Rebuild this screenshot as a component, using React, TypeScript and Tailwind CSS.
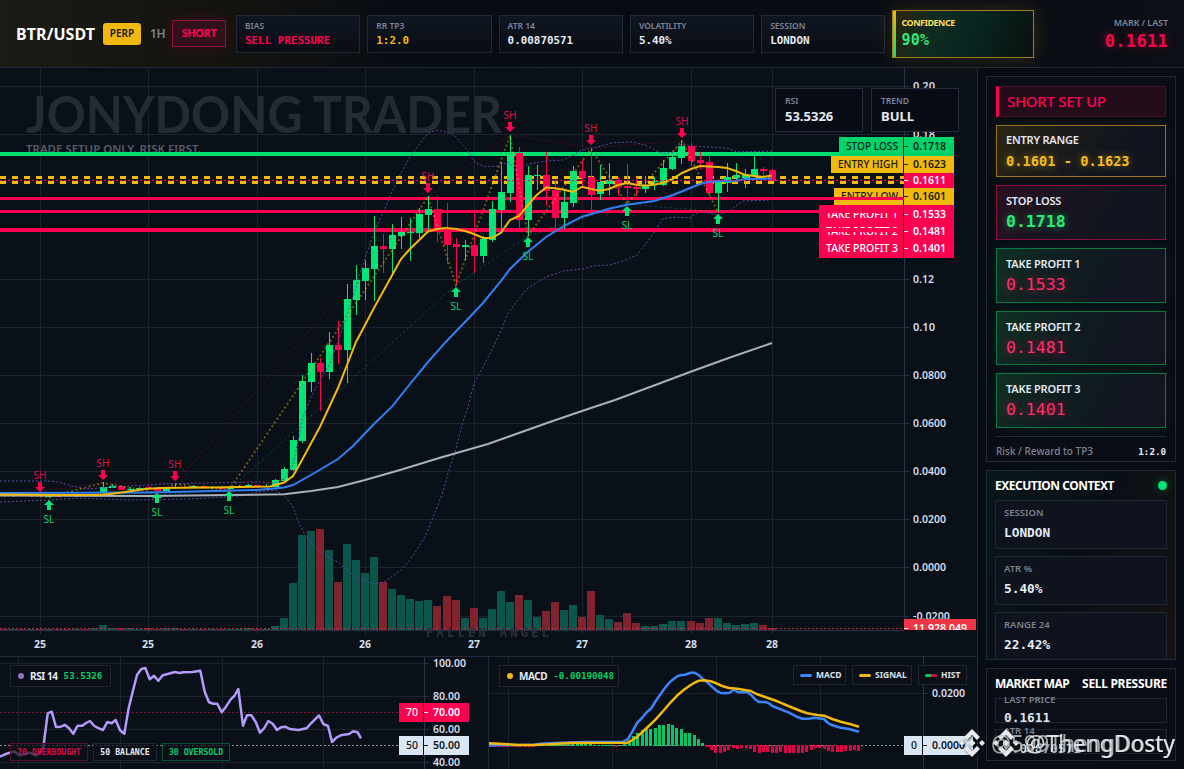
import type { ReactNode } from 'react';

type Candle = readonly [open: number, close: number, high: number, low: number, up: number, volTop: number];

// top, bottom, high, low, direction, volume top; one entry per hourly bar
const CANDLES: readonly Candle[] = [
  [495, 496, 494, 497, 0, 629], [495, 496, 494, 497, 1, 629], [494, 495, 493, 497, 0, 629], [494, 496, 493, 497, 1, 629],
  [494, 496, 491, 497, 0, 629], [496, 497, 495, 498, 1, 629], [496, 497, 495, 497, 0, 629], [495, 496, 494, 497, 0, 629],
  [495, 496, 494, 497, 1, 629], [495, 496, 494, 497, 0, 629], [494, 496, 493, 497, 1, 628], [487, 492, 482, 492, 1, 625],
  [486, 488, 484, 488, 1, 628], [486, 490, 485, 490, 0, 628], [489, 490, 487, 491, 1, 628], [488, 489, 487, 490, 1, 629],
  [487, 489, 486, 489, 0, 628], [489, 491, 488, 491, 0, 629], [489, 491, 488, 491, 1, 628], [487, 488, 484, 489, 1, 628],
  [487, 488, 486, 489, 0, 629], [486, 487, 485, 488, 1, 629], [486, 487, 485, 489, 0, 629], [487, 488, 486, 489, 1, 629],
  [487, 489, 486, 489, 0, 629], [487, 489, 486, 489, 1, 629], [486, 487, 485, 488, 1, 629], [485, 486, 484, 487, 1, 628],
  [485, 486, 485, 488, 0, 629], [486, 487, 484, 487, 1, 629], [480, 487, 479, 487, 1, 626], [469, 481, 467, 481, 1, 618],
  [440, 470, 436, 471, 1, 583], [381, 441, 375, 443, 1, 535], [363, 382, 353, 392, 1, 531], [363, 372, 358, 411, 0, 529],
  [345, 372, 332, 379, 1, 550], [345, 350, 321, 364, 0, 582], [299, 350, 284, 383, 1, 544], [280, 300, 265, 315, 1, 560],
  [268, 281, 260, 300, 1, 573], [246, 269, 216, 301, 1, 557], [246, 249, 234, 273, 0, 582], [235, 249, 224, 273, 1, 589],
  [232, 236, 217, 249, 1, 595], [232, 233, 218, 261, 1, 599], [214, 233, 208, 238, 1, 601], [209, 215, 196, 230, 1, 600],
  [209, 230, 196, 242, 0, 606], [230, 245, 203, 264, 0, 596], [244, 247, 238, 285, 0, 600], [245, 247, 240, 260, 1, 618],
  [245, 256, 213, 273, 0, 608], [239, 256, 236, 263, 1, 618], [209, 240, 201, 242, 1, 609], [192, 210, 162, 232, 1, 591],
  [154, 193, 135, 202, 1, 602], [153, 220, 147, 228, 0, 595], [175, 220, 166, 236, 1, 600], [175, 176, 165, 190, 1, 617],
  [175, 191, 152, 206, 0, 611], [190, 218, 179, 228, 0, 602], [202, 218, 191, 229, 1, 610], [171, 203, 166, 207, 1, 605],
  [171, 178, 160, 187, 0, 617], [177, 195, 148, 210, 0, 591], [182, 194, 165, 200, 1, 615], [180, 184, 163, 195, 1, 619],
  [180, 187, 177, 196, 0, 622], [186, 188, 164, 204, 0, 613], [187, 189, 178, 196, 0, 623], [185, 189, 176, 193, 1, 626],
  [181, 182, 177, 190, 1, 626], [168, 185, 160, 186, 1, 624], [157, 169, 156, 170, 1, 621], [146, 158, 141, 164, 1, 621],
  [146, 161, 143, 166, 0, 621], [160, 163, 152, 170, 0, 623], [162, 193, 155, 196, 0, 618], [182, 193, 180, 212, 1, 618],
  [177, 183, 163, 192, 1, 623], [175, 178, 163, 181, 1, 625], [174, 178, 169, 188, 1, 624], [169, 176, 156, 177, 1, 623],
  [169, 171, 167, 177, 0, 625], [170, 181, 169, 181, 0, 628],
];

const MA_FAST =
  '0,494.5 60,495 98,495 110,494 125,492 145,489 160,488 210,487.5 270,486.5 284,482.5 293,476 302,460 320,426.7 338,388 356,342 374,308 401,259 410,249 428,231.5 437,229 446,228 456,229 465,231 474,234 483,238 492,238 501,232.7 510,220 519,216 528,205 537,194.7 546,187.5 555,188.3 564,189.7 573,192 582,186.7 591,189 600,190.7 609,189 618,185 627,183 636,184.7 645,185.7 654,184.7 663,182.7 672,179.3 682,173 691,169 700,166 718,167 727,168 736,171 745,175 754,176 763,177 772,175.5';
const MA_MID =
  '0,493 150,492.5 257,490 284,487.5 293,485 311,475 338,459 353,446 374,424 392,406.7 410,384 428,362 446,341.7 465,322 483,303 501,281 510,269 528,251.7 546,237 564,226 582,216.7 609,208.7 627,204.7 654,201 673,195 700,184 709,181.7 718,180.7 736,181 745,179 772,178.7';
const MA_SLOW =
  '0,495.5 150,496 230,495 284,494.3 311,491 338,487 365,480 400,470 440,457.7 474,448 488,444 547,423 582,411 615,400 650,387 690,372 730,357.5 772,343';
const BAND_TOP =
  '0,481 50,481 60,482.5 72,486 85,489 100,488 130,486 165,484 200,483 257,482 275,483 284,479 293,465 299,436 302,420 311,397 320,380 329,365 338,342 347,315 356,287 365,258 374,233 383,213 395,185 400,175 410,157 428,133 438,130 453,134 467,150 475,163 485,166.5 500,166 508,162 517,171 528,164 547,161 563,160 573,155 582,150 597,147 613,142.7 633,142 645,145 663,154 673,152 682,143 690,146 727,148 737,152 772,151';
const BAND_BOTTOM =
  '0,502 50,500 80,498 100,499 130,500 190,499 240,496 257,492 275,490 284,495 293,507 299,523 305,535 311,543 320,551 329,558 338,562 350,573 362,580 374,584 384,582 400,571 410,560 425,537 433,517 442,495 448,473 455,452 463,422 467,410 474,383 483,367 492,350 500,333 508,313 518,300 528,288 546,277 563,271 583,269 593,266 610,265 623,261 637,255 650,238 663,219 673,217 690,218 700,211 717,215 728,212 743,201 770,200';

const SWING = '0,493 49,497 103,483 157,493 175,484 229,490 428,197 456,285 510,136 528,236 591,149 627,204 682,141 718,212';
const SWING_HIGHS = '40,491 103,483 175,483 428,197 510,135 591,148 682,141';
const SWING_LOWS = '49,497 157,495 229,490 456,285 528,236 627,204 718,212';

const HIGHS = [[40, 482], [103, 470], [175, 471], [428, 183], [510, 122], [591, 135], [682, 128]] as const;
const LOWS = [[49, 500], [157, 493], [229, 491], [456, 287], [528, 237], [627, 206], [718, 214]] as const;

const TIME_TICKS = [[40, '25'], [148, '25'], [257, '26'], [365, '26'], [474, '27'], [582, '27'], [691, '28'], [772, '28']] as const;
const PRICE_TICKS = [
  [86, '0.20', 22], [134, '0.18', 22], [182, '', 0], [231, '', 0], [279, '0.12', 21], [327, '0.10', 22],
  [375, '0.0800', 33], [423, '0.0600', 33], [471, '0.0400', 33], [519, '0.0200', 33], [567, '0.0000', 33], [616, '-0.0200', 37],
] as const;

const RSI_LINE =
  '0,756.5 5,754.3 10,752.6 15,751.6 19,755.3 25,754 30,752.6 36,755.3 40,752.6 43.3,747.3 47.7,713.3 51.7,711.7 56,727 60.7,726.7 65,725 69,728.3 73.3,733.7 77.7,725.7 82.3,725.7 86,723 90,721 94.3,726 99,728.3 103,730 107.3,722 111.7,723.3 115.7,720 120,730.3 124.3,733.7 128.7,708 132.7,691.7 137,675 141.3,669 145.3,668 149.7,679.3 154,675.7 158.3,680.7 162.7,675.3 166.7,674.3 175,672 179.3,673 183.3,672.3 192.7,672 200.3,670.7 204.7,691.7 209,702.3 213.3,703.7 217.3,703.7 221.7,712.3 226,706.7 230.7,699.3 234.3,696 238.3,689 243,725.7 247,715.3 251.3,715.3 255.7,722 260,732.7 264.3,728 268.3,721 272.7,723.7 277,730 281,727.3 285.3,726.7 289.7,729 298.3,730 306.7,728.3 311,723.3 319,715.3 323.3,724 328,726 332,742 336.7,737.3 340.7,735.3 349,734 353.3,731.3 357.7,732.3 361,738.3';

const MACD_LINE =
  '489,745.3 534,744.7 540.7,743.7 560.7,742.7 584,742 622.3,742 628,739 632.3,731.7 637.3,722.7 642,718 646.7,712.3 651.3,708.3 655.7,701 664,689.3 668.3,683.7 672.7,679.7 677.3,676.3 681.3,675 685,674.7 690.7,672.7 694.7,672.7 699,675.3 703.3,679.3 707.3,682.3 716.3,690.7 720.7,693 725.7,693.3 729.7,692.7 734,689.7 738,692.3 747.3,692.3 751.3,695 755,699.3 759,702 765.7,702 769,703.3 772.3,706 780.7,709.3 789,712.7 797.3,717 802.3,718.7 809,718.7 814,717.7 824,719 828,723 832.3,725.3 840.7,727.7 849,729 859,731.7';
const SIGNAL_LINE =
  '489,743.3 504,744 517.3,745 534,745 550.7,744.3 570.7,743 627.3,742.7 632.3,740 637.3,736.7 642,732.3 646.7,728 651.3,723.7 655.7,719.3 664,710 670.7,702.3 677.3,695.3 684,689.7 690.7,685 694.7,682.7 699,680.7 704,680.3 710.7,681.3 716.3,683.3 722.3,686 729,688 737.3,688.7 750.7,691 757.3,694.3 767.3,697.7 777.3,701.3 790.7,707 800.7,711 807.3,713.3 817.3,715 824,715.7 832.3,719 840.7,721.7 850.7,724.3 859,726.7';

const HIST = [
  -1, -1, -1, -1, -1, -1, -1, -1, -1, -1, -1, 2, 2, 2, 2, 1, 2, 2, 2, 2, 2, 2, 2, 2, 1, 1, 1, 1, 1, -1, 1, 2, 4,
  10, 13, 16, 17, 17, 18, 21, 21, 22, 21, 18, 17, 13, 13, 11, 7, 3,
  -1, -4, -7, -7, -6, -4, -2, -3, -2, -2, -3, -6, -7, -6, -6, -7, -7, -6, -7, -7, -7, -7, -7, -6, -4, -2, -2, -3, -5, -6, -6, -6, -5, -5, -4, -5,
];

const UP = '#00e676';
const DOWN = '#ff0051';
const GOLD = '#f0b90b';

const barCenter = (i: number) => Math.round(39.85 + (i - 4) * 9.037);

function Label({
  x,
  y,
  w,
  children,
  fill = '#d5dcea',
  size = 11,
  weight = 600,
  anchor = 'start',
}: {
  x: number;
  y: number;
  w?: number;
  children: ReactNode;
  fill?: string;
  size?: number;
  weight?: number;
  anchor?: 'start' | 'middle' | 'end';
}) {
  return (
    <text
      x={x}
      y={y}
      fill={fill}
      fontSize={size}
      fontWeight={weight}
      textAnchor={anchor}
      textLength={w}
      lengthAdjust={w ? 'spacingAndGlyphs' : undefined}
    >
      {children}
    </text>
  );
}

function Tag({ x, y, h, name, w, price, bg, fill }: { x: number; y: number; h: number; name: string; w: number; price: string; bg: string; fill: string }) {
  const mid = Math.floor(y + h / 2);
  return (
    <g>
      {name ? <rect x={x} y={y} width={903 - x} height={h} fill={bg} /> : null}
      <rect x={904} y={y} width={50} height={h} fill={bg} />
      <rect x={904} y={mid} width={4} height={1} fill={fill} />
      {name ? <Label x={898} y={mid + 4} w={w} fill={fill} weight={500} anchor="end">{name}</Label> : null}
      <Label x={913} y={mid + 4} w={33} fill={fill}>{price}</Label>
    </g>
  );
}

function LevelLines({ from }: { from: number }) {
  return (
    <g>
      <rect x={from} y={197} width={904 - from} height={3} fill={DOWN} />
      <rect x={from} y={210} width={903 - from} height={3} fill={DOWN} />
      <rect x={from} y={228} width={903 - from} height={4} fill={DOWN} />
    </g>
  );
}

function PriceChart() {
  return (
    <svg className="block h-[588px] w-[977px]" viewBox="0 68 977 588">
      <g fill="#1c232d">
        {TIME_TICKS.map(([x]) => <rect key={x} x={x} y={68} width={1} height={562} />)}
        {PRICE_TICKS.map(([y]) => <rect key={y} x={0} y={y} width={904} height={1} />)}
      </g>

      <text
        x={26}
        y={133}
        fontSize={52}
        fontWeight={700}
        fill="#252b35"
        textLength={476}
        lengthAdjust="spacingAndGlyphs"
        className="font-['Lato','Noto_Sans',sans-serif]"
      >
        JONYDONG TRADER
      </text>
      <Label x={26} y={153} w={175} size={11.5} weight={600} fill="#565c65">TRADE SETUP ONLY. RISK FIRST.</Label>

      {CANDLES.map(([, , , , up, top], i) => (
        <rect key={i} x={barCenter(i) - 4} y={top} width={8} height={630 - top} fill={up ? '#0a564c' : '#82222f'} />
      ))}
      <path d="M0 628.5H904" stroke="#c22a45" strokeDasharray="2 2" />
      <text x={426} y={637} fontSize={12} fontWeight={700} fill="#2b303a" textLength={123} className="font-['DejaVu_Sans_Mono',monospace]">
        FALLEN ANGEL
      </text>

      <rect x={0} y={152} width={903} height={4} fill="#00e070" />
      <g fill={GOLD}>
        {Array.from({ length: 76 }, (_, i) => (
          <path key={i} d={`M${i * 12} 176h6v3h-6zM${i * 12} 181h6v3h-6z`} />
        ))}
      </g>
      <LevelLines from={0} />

      {CANDLES.map(([top, bottom, high, low, up], i) => {
        const x = barCenter(i);
        return (
          <g key={i} fill={up ? UP : DOWN}>
            <rect x={x} y={high} width={1} height={low - high} />
            <rect x={x - 3} y={top} width={7} height={bottom - top} />
          </g>
        );
      })}

      <g fill="none">
        <polyline points={BAND_TOP} stroke="#5d4aa0" strokeDasharray="2 2" />
        <polyline points={BAND_BOTTOM} stroke="#5d4aa0" strokeDasharray="2 2" />
        <polyline points={SWING_HIGHS} stroke={DOWN} strokeOpacity={0.32} strokeDasharray="2 3" />
        <polyline points={SWING_LOWS} stroke={UP} strokeOpacity={0.32} strokeDasharray="2 3" />
        <polyline points={SWING} stroke={GOLD} strokeOpacity={0.42} strokeWidth={2} strokeDasharray="2 2.5" />
        <polyline points={MA_SLOW} stroke="#a9b0bb" strokeWidth={2} />
        <polyline points={MA_MID} stroke="#2f80f5" strokeWidth={2} />
        <polyline points={MA_FAST} stroke={GOLD} strokeWidth={2} />
      </g>

      {HIGHS.map(([x, y]) => (
        <g key={x}>
          <path d={`M${x - 2} ${y}h4v5h3l-5 5l-5 -5h3z`} fill={DOWN} />
          <Label x={x} y={y - 3} w={13} fill="#dc0f4c" weight={400} anchor="middle">SH</Label>
        </g>
      ))}
      {LOWS.map(([x, y]) => (
        <g key={x}>
          <path d={`M${x - 2} ${y + 10}h4v-5h3l-5 -5l-5 5h3z`} fill={UP} />
          <Label x={x} y={y + 23} w={11} fill="#06d26e" weight={400} anchor="middle">SL</Label>
        </g>
      ))}

      <rect x={904} y={68} width={1} height={562} fill="#2a3046" />
      <rect x={0} y={630} width={904} height={1} fill="#2a3046" />
      {TIME_TICKS.map(([x, t]) => (
        <g key={x}>
          <rect x={x} y={631} width={1} height={3} fill="#2a3046" />
          <Label x={x} y={648} w={12} weight={700} anchor="middle">{t}</Label>
        </g>
      ))}
      {PRICE_TICKS.map(([y, t, w]) =>
        t ? (
          <g key={y}>
            <rect x={905} y={y} width={4} height={1} fill="#2a3046" />
            <Label x={913} y={y + 4} w={w}>{t}</Label>
          </g>
        ) : null,
      )}

      <Tag x={839} y={137} h={19} name="STOP LOSS" w={52} price="0.1718" bg="#00d46b" fill="#06231a" />
      <Tag x={831} y={156} h={17} name="ENTRY HIGH" w={60} price="0.1623" bg={GOLD} fill="#1a1706" />
      <Tag x={904} y={173} h={15} name="" w={0} price="0.1611" bg={DOWN} fill="#ffffff" />
      <Tag x={834} y={188} h={17} name="ENTRY LOW" w={57} price="0.1601" bg={GOLD} fill="#1a1706" />
      <Tag x={819} y={205} h={18} name="TAKE PROFIT 1" w={72} price="0.1533" bg={DOWN} fill="#ffffff" />
      <Tag x={819} y={223} h={17} name="TAKE PROFIT 2" w={72} price="0.1481" bg={DOWN} fill="#ffffff" />
      <Tag x={819} y={239} h={19} name="TAKE PROFIT 3" w={72} price="0.1401" bg={DOWN} fill="#ffffff" />
      <LevelLines from={810} />
      <path d="M0 180.5H904" stroke={DOWN} strokeDasharray="2 2" />

      {/* last volume, cut off by the time axis */}
      <svg x={904} y={619} width={72} height={11}>
        <rect width={72} height={11} fill="#f23645" />
        <rect y={9} width={4} height={1} fill="#ffffff" />
        <Label x={9} y={13} w={54} fill="#ffffff">11,928,049</Label>
      </svg>
    </svg>
  );
}

function AxisTag({ x, y, name, value, bg, fill, split, right }: { x: number; y: number; name: string; value: string; bg: string; fill: string; split: number; right: number }) {
  return (
    <g>
      <rect x={x} y={y} width={split - x} height={19} fill={bg} />
      <rect x={split + 1} y={y} width={right - split} height={19} fill={bg} />
      <rect x={split + 1} y={y + 9} width={4} height={1} fill={fill} />
      <Label x={split - 5} y={y + 13} w={name.length * 6} fill={fill} weight={500} anchor="end">{name}</Label>
      <Label x={split + 10} y={y + 13} w={value.length > 5 ? 33 : 27} fill={fill}>{value}</Label>
    </g>
  );
}

function RsiChart() {
  return (
    <svg className="block h-[112px] w-[488px]" viewBox="0 657 488 112">
      <g fill="#1c232d">
        {[18, 120, 222, 323].map((x) => <rect key={x} x={x} y={657} width={1} height={112} />)}
        {[663, 696, 729, 762].map((y) => <rect key={y} x={0} y={y} width={424} height={1} />)}
      </g>
      <path d="M0 712.5H400" stroke="#8d0a38" strokeDasharray="2 2" />
      <path d="M0 745.5H400" stroke="#8a909a" strokeDasharray="2 2" />
      <polyline points={RSI_LINE} fill="none" stroke="#b49afa" strokeWidth={2.5} strokeLinejoin="round" />
      <rect x={424} y={657} width={1} height={112} fill="#2a3046" />
      {([[663, '100.00', 33], [696, '80.00', 27], [729, '60.00', 27], [762, '40.00', 27]] as const).map(([y, t, w]) => (
        <g key={y}>
          <rect x={425} y={y} width={4} height={1} fill="#2a3046" />
          <Label x={433} y={y + 4} w={w}>{t}</Label>
        </g>
      ))}
      <AxisTag x={399} y={703} name="70" value="70.00" bg={DOWN} fill="#ffffff" split={423} right={468} />
      <AxisTag x={399} y={736} name="50" value="50.00" bg="#dbe6f5" fill="#10151d" split={423} right={468} />
    </svg>
  );
}

function MacdChart() {
  return (
    <svg className="block h-[112px] w-[488px]" viewBox="489 657 488 112">
      <g fill="#1c232d">
        {[508, 612, 716, 820].map((x) => <rect key={x} x={x} y={657} width={1} height={112} />)}
        <rect x={489} y={693} width={434} height={1} />
      </g>
      <path d="M489 745.5H904" stroke="#8a909a" strokeDasharray="2 2" />
      {HIST.map((v, i) => (
        <rect
          key={i}
          x={Math.round(488.9 + i * 4.335)}
          y={v > 0 ? 746 - v : 745}
          width={3}
          height={Math.abs(v) + (v < 0 ? 1 : 0)}
          fill={v > 0 ? '#06c568' : '#dc0448'}
        />
      ))}
      <g fill="none" strokeWidth={2.5} strokeLinejoin="round">
        <polyline points={MACD_LINE} stroke="#3b86ff" />
        <polyline points={SIGNAL_LINE} stroke={GOLD} />
      </g>
      <rect x={923} y={657} width={1} height={112} fill="#2a3046" />
      <rect x={924} y={693} width={4} height={1} fill="#2a3046" />
      <Label x={932} y={697} w={33}>0.0200</Label>
      <AxisTag x={904} y={736} name="0" value="0.0000" bg="#dbe6f5" fill="#10151d" split={922} right={972} />
    </svg>
  );
}

function HeaderStat({ label, value, className = 'text-[#e5ebf5]' }: { label: string; value: string; className?: string }) {
  return (
    <div className="mr-[7px] flex h-[38px] w-[124.3px] shrink-0 flex-col justify-center border border-[#222935] bg-[linear-gradient(180deg,#101722,#090d14)] pt-[2px] pl-2">
      <p className="text-[8.5px] leading-[10px] font-semibold text-[#7c8598]">{label}</p>
      <p className={`mt-[3px] font-['DejaVu_Sans_Mono',monospace] text-[10.9px] leading-[14px] font-bold ${className}`}>{value}</p>
    </div>
  );
}

function Header() {
  return (
    <header className="flex h-[68px] items-center border-b border-[#222a3a] bg-[linear-gradient(90deg,#1b1a14_0%,#14140f_18%,#070b14_36%,#080c14_75%,#0d0f16_100%)] pr-4 pl-4">
      <h1 className="w-[87px] text-[16px] font-bold tracking-[0.1px] whitespace-nowrap text-white">BTR/USDT</h1>
      <span className="flex h-[22px] w-[38px] items-center justify-center rounded-[3px] bg-[#f0b90b] text-[10px] font-semibold text-[#14130b]">PERP</span>
      <span className="ml-[9px] w-[22px] text-[12px] font-semibold tracking-[-0.4px] text-[#7c8598]">1H</span>
      <span className="mr-[10px] flex h-[27px] w-[54px] items-center justify-center border border-[#8f0e3c] bg-[#33111c] text-[11px] font-bold tracking-[-0.4px] text-[#ff0051] shadow-[0_0_18px_#ff005126]">SHORT</span>
      <HeaderStat label="BIAS" value="SELL PRESSURE" className="text-[#ff0051]" />
      <HeaderStat label="RR TP3" value="1:2.0" className="text-[#f0b90b]" />
      <HeaderStat label="ATR 14" value="0.00870571" />
      <HeaderStat label="VOLATILITY" value="5.40%" />
      <HeaderStat label="SESSION" value="LONDON" />
      <div className="flex h-[48px] w-[142px] shrink-0 border border-[#a17d14] bg-[linear-gradient(110deg,#2b2510_0%,#0f2c22_30%,#082620_55%,#09110f_100%)] shadow-[0_0_20px_#f0b90b2e]">
        <div className="w-[3px] bg-[linear-gradient(180deg,#f0b90b,#00e676)]" />
        <div className="pt-[6px] pl-[5px]">
          <p className="text-[9px] leading-[12px] font-bold tracking-[-0.5px] text-[#ffdc55]">CONFIDENCE</p>
          <p className="mt-[3px] font-['DejaVu_Sans_Mono',monospace] text-[15px] leading-[17px] font-bold tracking-[0.2px] text-[#2bea76]">90%</p>
        </div>
      </div>
      <div className="ml-auto text-right">
        <p className="text-[9px] leading-[12px] font-semibold tracking-[-0.1px] text-[#7c8598]">MARK / LAST</p>
        <p className="mt-[2px] font-['DejaVu_Sans_Mono',monospace] text-[17px] leading-[20px] font-bold tracking-[0.3px] text-[#ff0051] [text-shadow:0_0_10px_#ff005166]">0.1611</p>
      </div>
    </header>
  );
}

function FloatingStat({ label, value, className = '' }: { label: string; value: string; className?: string }) {
  return (
    <div className={`h-[44px] w-[88px] border border-[#222b40] bg-[#080c14f2] pt-[6px] pl-[9px] ${className}`}>
      <p className="text-[8.5px] leading-[12px] font-semibold text-[#7c8598]">{label}</p>
      <p className="mt-px text-[13px] leading-[16px] font-bold text-[#e5ebf5]">{value}</p>
    </div>
  );
}

function Legend({ name, className, width }: { name: string; className: string; width: string }) {
  return (
    <div className={`flex h-[20px] items-center gap-[4px] border border-[#1f2631] bg-[#0b1017] pl-[6px] text-[8.5px] font-bold text-[#dbe2ee] ${width}`}>
      <span className={`h-[3px] w-[12px] rounded-full ${className}`} />
      {name}
    </div>
  );
}

function PanelChip({ dot, name, value, width }: { dot: string; name: string; value: string; width: string }) {
  return (
    <div className={`flex h-[22px] items-center border border-[#1f2631] bg-[#0a0e15] pl-[7px] ${width}`}>
      <span className={`size-[6px] rounded-full ${dot}`} />
      <span className="ml-[6px] text-[10px] font-bold tracking-[-0.4px] whitespace-nowrap text-[#e5ebf5]">{name}</span>
      <span className="ml-[6px] font-['DejaVu_Sans_Mono',monospace] text-[9.2px] font-bold text-[#00cf6a]">{value}</span>
    </div>
  );
}

function LevelCard({ label, value, card, text }: { label: string; value: string; card: string; text: string }) {
  return (
    <div className={`mt-2 flex shrink-0 flex-col justify-center border pl-[9px] ${card}`}>
      <p className="text-[11px] leading-[14px] font-semibold tracking-[-0.2px] text-[#e3e8f2]">{label}</p>
      <p className={`mt-[5px] font-['DejaVu_Sans_Mono',monospace] leading-[18px] ${text}`}>{value}</p>
    </div>
  );
}

const TP_CARD = 'border-[#0a7a45] bg-[linear-gradient(120deg,#103023_0%,#0f1e22_40%,#111620_70%)] shadow-[0_0_12px_#00e67614]';
const TP_TEXT = 'text-[16.5px] text-[#ff2f68] [text-shadow:0_0_8px_#ff0051aa]';

function ContextCard({ label, value }: { label: string; value: string }) {
  return (
    <div className="mb-[7px] h-[49px] shrink-0 border border-[#202733] bg-[#0e131d] pt-[5px] pl-[8px]">
      <p className="text-[9.5px] leading-[13px] font-semibold text-[#7c8390]">{label}</p>
      <p className="mt-[6px] font-['DejaVu_Sans_Mono',monospace] text-[12.8px] leading-[16px] font-bold text-[#e5ebf5]">{value}</p>
    </div>
  );
}

function MapCard({ label, value }: { label: string; value: string }) {
  return (
    <div className="mb-[6px] flex h-[25px] shrink-0 flex-col justify-center border border-[#202733] bg-[#0b1018] pb-[2px] pl-[8px]">
      <p className="text-[9.5px] leading-[13px] font-semibold whitespace-nowrap text-[#7c8390]">{label}</p>
      <p className="mt-[4px] font-['DejaVu_Sans_Mono',monospace] text-[12.8px] leading-[16px] font-bold text-[#dde3ee]">{value}</p>
    </div>
  );
}

function Sidebar() {
  return (
    <aside className="flex w-[206px] flex-col bg-[#080d15] pt-2 pr-2 pl-2">
      <section className="flex h-[386px] w-[190px] shrink-0 flex-col border border-[#222b3c] bg-[#090d15] px-[9px] pt-[9px]">
        <h2 className="flex h-[31px] shrink-0 items-center border border-l-[3px] border-[#4a1028] border-l-[#ff0051] bg-[#230d1b] pl-[8px] text-[15px] font-medium tracking-[-0.3px] text-[#ff0051]">
          SHORT SET UP
        </h2>
        <LevelCard label="ENTRY RANGE" value="0.1601 - 0.1623" card="h-[52px] border-[#94741a] bg-[linear-gradient(120deg,#2b2613_0%,#1b1c1b_35%,#10151f_70%)] shadow-[0_0_10px_#f0b90b1a]" text="text-[13.7px] font-bold text-[#f5bd16] [text-shadow:0_0_8px_#f0b90b99]" />
        <LevelCard label="STOP LOSS" value="0.1718" card="h-[55px] border-[#8f0e3c] bg-[linear-gradient(120deg,#2c0f21_0%,#1a1420_35%,#10151f_70%)]" text="text-[16.5px] font-bold text-[#2bea76] [text-shadow:0_0_8px_#00e67699]" />
        <LevelCard label="TAKE PROFIT 1" value="0.1533" card={`h-[55px] ${TP_CARD}`} text={TP_TEXT} />
        <LevelCard label="TAKE PROFIT 2" value="0.1481" card={`h-[54px] ${TP_CARD}`} text={TP_TEXT} />
        <LevelCard label="TAKE PROFIT 3" value="0.1401" card={`h-[55px] ${TP_CARD}`} text={TP_TEXT} />
        <div className="mt-2 flex h-[30px] shrink-0 items-center justify-between border-t border-[#222b3c]">
          <span className="text-[10px] font-medium text-[#7c8390]">Risk / Reward to TP3</span>
          <span className="font-['DejaVu_Sans_Mono',monospace] text-[9.2px] font-bold text-[#e5ebf5]">1:2.0</span>
        </div>
      </section>

      <section className="mt-2 flex h-[190px] w-[190px] shrink-0 flex-col overflow-hidden border border-[#222b3c] bg-[linear-gradient(115deg,#08181a_0%,#090f17_45%,#15130f_100%)] px-[8px]">
        <div className="flex h-[29px] shrink-0 items-center justify-between">
          <h2 className="text-[12px] font-bold tracking-[-0.5px] whitespace-nowrap text-white">EXECUTION CONTEXT</h2>
          <span className="size-[9px] rounded-full bg-[#00e676] shadow-[0_0_10px_#00e67666]" />
        </div>
        <ContextCard label="SESSION" value="LONDON" />
        <ContextCard label="ATR %" value="5.40%" />
        <ContextCard label="RANGE 24" value="22.42%" />
      </section>

      <section className="mt-2 flex h-[93px] w-[190px] shrink-0 flex-col border border-[#222b3c] bg-[#090d15] px-[8px]">
        <div className="flex h-[29px] shrink-0 items-center justify-between text-[12px] font-bold tracking-[-0.5px] whitespace-nowrap text-white">
          <h2>MARKET MAP</h2>
          <span className="tracking-[-0.3px]">SELL PRESSURE</span>
        </div>
        <MapCard label="LAST PRICE" value="0.1611" />
        <MapCard label="ATR 14" value="0.00870571" />
      </section>
    </aside>
  );
}

function Diamond({ x }: { x: number }) {
  return (
    <g transform={`translate(${x} 27)`} fill="#e8eaee">
      <path d="M0 -14L8 -6L5 -3L0 -8L-5 -3L-8 -6zM0 14L8 6L5 3L0 8L-5 3L-8 6zM0 -3.5L3.5 0L0 3.5L-3.5 0zM-10 -3L-7 0L-10 3L-13 0zM10 -3L13 0L10 3L7 0z" />
    </g>
  );
}

// stacked share stamps in the bottom corner
function Stamp() {
  return (
    <svg className="pointer-events-none absolute right-0 bottom-0 h-[53px] w-[230px]" viewBox="0 0 230 53">
      <g className="[filter:drop-shadow(1px_1px_1px_#000000aa)]">
        <Diamond x={18} />
        <Diamond x={52} />
        <Label x={37} y={36} w={184} size={24} weight={400} fill="#c4c8ced0">@599ThengDosty</Label>
        <Label x={71} y={36} w={150} size={24} weight={400} fill="#f0f2f5d8">@ThengDosty</Label>
      </g>
    </svg>
  );
}

export default function App() {
  return (
    <div className="relative h-[769px] w-[1184px] overflow-hidden bg-[#0a1018] font-['Noto_Sans','Open_Sans',sans-serif] font-stretch-semi-condensed">
      <Header />
      <div className="flex h-[701px]">
        <main className="w-[978px] shrink-0 border-r border-[#222a3a]">
          <div className="relative h-[588px]">
            <PriceChart />
            <div className="absolute top-[20px] left-[775px] flex gap-2">
              <FloatingStat label="RSI" value="53.5326" />
              <FloatingStat label="TREND" value="BULL" />
            </div>
          </div>
          <div className="flex h-[113px] border-t border-[#222a3a]">
            <div className="relative w-[488px] shrink-0">
              <RsiChart />
              <div className="absolute top-[8px] left-[10px]">
                <PanelChip dot="bg-[#8a76c4]" name="RSI 14" value="53.5326" width="w-[101px]" />
              </div>
              <div className="absolute top-[86px] left-[10px] flex gap-[5px] font-['DejaVu_Sans_Mono',monospace] text-[8.2px] font-bold whitespace-nowrap">
                <span className="flex h-[18px] w-[78px] items-center justify-center border border-[#5d0d2c] bg-[#0b0f17b0] text-[#dc0848]">70 OVERBOUGHT</span>
                <span className="flex h-[18px] w-[64px] items-center justify-center border border-[#1f2631] bg-[#0b0f17b0] text-[#e5ebf5]">50 BALANCE</span>
                <span className="flex h-[18px] w-[68px] items-center justify-center border border-[#0b5233] bg-[#0b0f17b0] text-[#00cf6a]">30 OVERSOLD</span>
              </div>
            </div>
            <div className="relative w-[489px] shrink-0 border-l border-[#222a3a]">
              <MacdChart />
              <div className="absolute top-[8px] left-[10px]">
                <PanelChip dot="bg-[#f0b90b]" name="MACD" value="-0.00190048" width="w-[120px]" />
              </div>
              <div className="absolute top-[8px] left-[304px] flex gap-[6px]">
                <Legend name="MACD" className="bg-[#3b86ff]" width="w-[53px]" />
                <Legend name="SIGNAL" className="bg-[#f0b90b]" width="w-[60px]" />
                <Legend name="HIST" className="bg-[linear-gradient(90deg,#06c568_50%,#dc0448_50%)]" width="w-[49px]" />
              </div>
            </div>
          </div>
        </main>
        <Sidebar />
      </div>
      <Stamp />
    </div>
  );
}
